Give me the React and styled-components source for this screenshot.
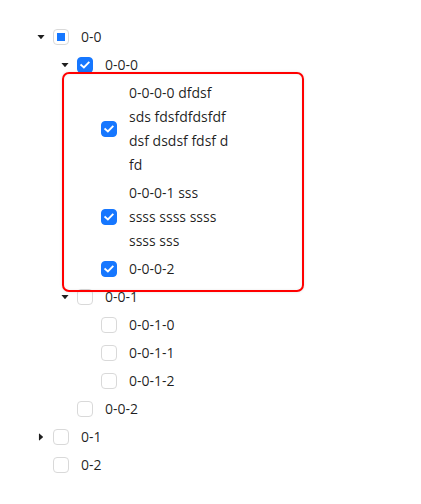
import * as React from 'react'
import styled, { createGlobalStyle } from 'styled-components'

const GlobalStyle = createGlobalStyle`
  html, body {
    margin: 0;
    padding: 0;
    background: #ffffff;
  }
  body {
    font-family: "Open Sans", "Noto Sans", sans-serif;
    font-size: 14px;
    color: rgba(0, 0, 0, 0.88);
  }
`

const treeData = [
  {
    key: '0-0',
    title: '0-0',
    state: 'half',
    open: true,
    children: [
      {
        key: '0-0-0',
        title: '0-0-0',
        state: 'checked',
        open: true,
        children: [
          { key: '0-0-0-0', title: '0-0-0-0 dfdsf\nsds fdsfdfdsfdf\ndsf dsdsf fdsf d\nfd', state: 'checked' },
          { key: '0-0-0-1', title: '0-0-0-1 sss\nssss ssss ssss\nssss sss', state: 'checked' },
          { key: '0-0-0-2', title: '0-0-0-2', state: 'checked' },
        ],
      },
      {
        key: '0-0-1',
        title: '0-0-1',
        open: true,
        children: [
          { key: '0-0-1-0', title: '0-0-1-0' },
          { key: '0-0-1-1', title: '0-0-1-1' },
          { key: '0-0-1-2', title: '0-0-1-2' },
        ],
      },
      { key: '0-0-2', title: '0-0-2' },
    ],
  },
  { key: '0-1', title: '0-1', open: false, children: [{ key: '0-1-0', title: '0-1-0' }] },
  { key: '0-2', title: '0-2' },
]

const StyledPage = styled.div`
  padding: 25px 0 0 29px;
`

const StyledTree = styled.div`
  position: relative;
  width: 360px;
`

const StyledHighlight = styled.div`
  position: absolute;
  top: 47px;
  left: 33px;
  width: 242px;
  height: 220px;
  box-sizing: border-box;
  border: 2px solid #ff0000;
  border-radius: 7px;
  box-shadow: 0 0 3px rgba(0, 0, 0, 0.12), inset 0 0 3px rgba(0, 0, 0, 0.08);
  pointer-events: none;
`

const StyledNode = styled.div`
  display: flex;
  align-items: center;
  padding-bottom: 4px;
  padding-left: ${props => props.$level * 24}px;
`

const StyledSwitcher = styled.span`
  flex: none;
  width: 24px;
  height: 24px;
  display: flex;
  align-items: center;
  justify-content: center;
  color: rgba(0, 0, 0, 0.88);

  svg {
    transform: rotate(${props => (props.$open ? 0 : -90)}deg);
  }
`

const StyledCheckbox = styled.span`
  flex: none;
  position: relative;
  width: 16px;
  height: 16px;
  box-sizing: border-box;
  margin-right: 8px;
  border-radius: 4px;
  border: 1px solid ${props => (props.$state === 'checked' ? '#1677ff' : '#d9d9d9')};
  background: ${props => (props.$state === 'checked' ? '#1677ff' : '#ffffff')};
  display: flex;
  align-items: center;
  justify-content: center;
`

const StyledHalfMark = styled.span`
  width: 8px;
  height: 8px;
  background: #1677ff;
`

const StyledTitle = styled.span`
  padding: 0 4px;
  line-height: 24px;
  white-space: pre-line;
  color: rgba(0, 0, 0, 0.88);
`

const Caret = () => (
  <svg width="10" height="10" viewBox="0 0 1024 1024" fill="currentColor">
    <path d="M840.4 300H183.6c-19.7 0-30.7 20.8-18.5 35l328.4 380.8c9.4 10.9 27.5 10.9 37 0L858.9 335c12.2-14.2 1.2-35-18.5-35z" />
  </svg>
)

const Tick = () => (
  <svg width="10" height="8" viewBox="0 0 10 8" fill="none">
    <path d="M1.3 4.1 L3.9 6.5 L8.7 1.5" stroke="#ffffff" strokeWidth="1.9" strokeLinecap="square" strokeLinejoin="miter" />
  </svg>
)

const Checkbox = ({ state }) => (
  <StyledCheckbox $state={state}>
    {state === 'checked' && <Tick />}
    {state === 'half' && <StyledHalfMark />}
  </StyledCheckbox>
)

const TreeNode = ({ node, level }) => {
  const hasChildren = node.children && node.children.length > 0
  return (
    <>
      <StyledNode $level={level}>
        <StyledSwitcher $open={node.open}>{hasChildren && <Caret />}</StyledSwitcher>
        <Checkbox state={node.state} />
        <StyledTitle>{node.title}</StyledTitle>
      </StyledNode>
      {hasChildren && node.open &&
        node.children.map(child => <TreeNode key={child.key} node={child} level={level + 1} />)}
    </>
  )
}

const App = () => {
  return (
    <StyledPage>
      <GlobalStyle />
      <StyledTree>
        {treeData.map(node => <TreeNode key={node.key} node={node} level={0} />)}
        <StyledHighlight />
      </StyledTree>
    </StyledPage>
  )
}

export default App
